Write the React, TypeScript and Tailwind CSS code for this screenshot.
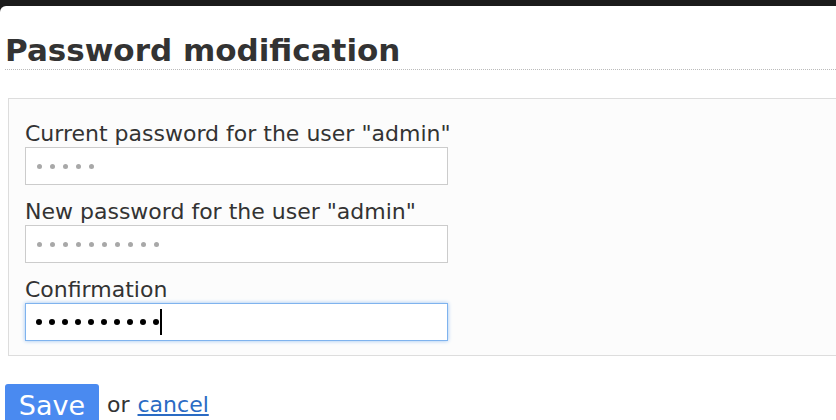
import React from "react";

function Dots({ n, dark }: { n: number; dark?: boolean }) {
  return (
    <div className={dark ? "flex items-center gap-[7px]" : "flex items-center gap-[8px]"}>
      {Array.from({ length: n }).map((_, i) => (
        <span
          key={i}
          className={
            dark
              ? "block w-[6px] h-[6px] rounded-full bg-black"
              : "block w-[5px] h-[5px] rounded-full bg-[#a8a8a8]"
          }
        />
      ))}
    </div>
  );
}

export default function App() {
  return (
    <div
      className="w-[836px] h-[420px] overflow-hidden bg-[#1b1b1b] text-[#333]"
      style={{ fontFamily: '"DejaVu Sans", sans-serif' }}
    >
      <div className="mt-[6px] h-[414px] bg-white rounded-tl-[6px] pl-[5px]">
        <h2 className="text-[31px] font-bold leading-none pt-[29px] pb-[3px] border-b border-dotted border-[#bbb] text-[#333]">
          Password modification
        </h2>
        <div className="mt-[28px] ml-[3px] border border-[#ddd] border-r-0 bg-[#fcfcfc] pl-[16px] pt-[22px] pb-[14px]">
          <label className="block text-[22px] leading-[26px] text-[#333]">
            Current password for the user "admin"
          </label>
          <div className="w-[423px] h-[38px] border border-[#ccc] bg-white flex items-center pl-[11px]">
            <Dots n={5} />
          </div>
          <label className="block text-[22px] leading-[26px] mt-[14px] text-[#333]">
            New password for the user "admin"
          </label>
          <div className="w-[423px] h-[38px] border border-[#ccc] bg-white flex items-center pl-[11px]">
            <Dots n={10} />
          </div>
          <label className="block text-[22px] leading-[26px] mt-[14px] text-[#333]">
            Confirmation
          </label>
          <div className="w-[423px] h-[38px] border border-[#7fb3ee] shadow-[0_0_4px_#9cc4f2] bg-white flex items-center pl-[10px]">
            <Dots n={10} dark />
            <span className="block w-[2px] h-[26px] bg-black ml-[1px]" />
          </div>
        </div>
        <div className="mt-[28px] flex items-center">
          <button className="bg-[#4a8af0] text-white text-[27px] leading-none h-[40px] pt-[3px] w-[94px] rounded-t-[3px]">
            Save
          </button>
          <span className="ml-[8px] text-[22px] text-[#333]">or</span>
          <a href="#" className="ml-[8px] text-[22px] text-[#2a6bc4] underline">
            cancel
          </a>
        </div>
      </div>
    </div>
  );
}
